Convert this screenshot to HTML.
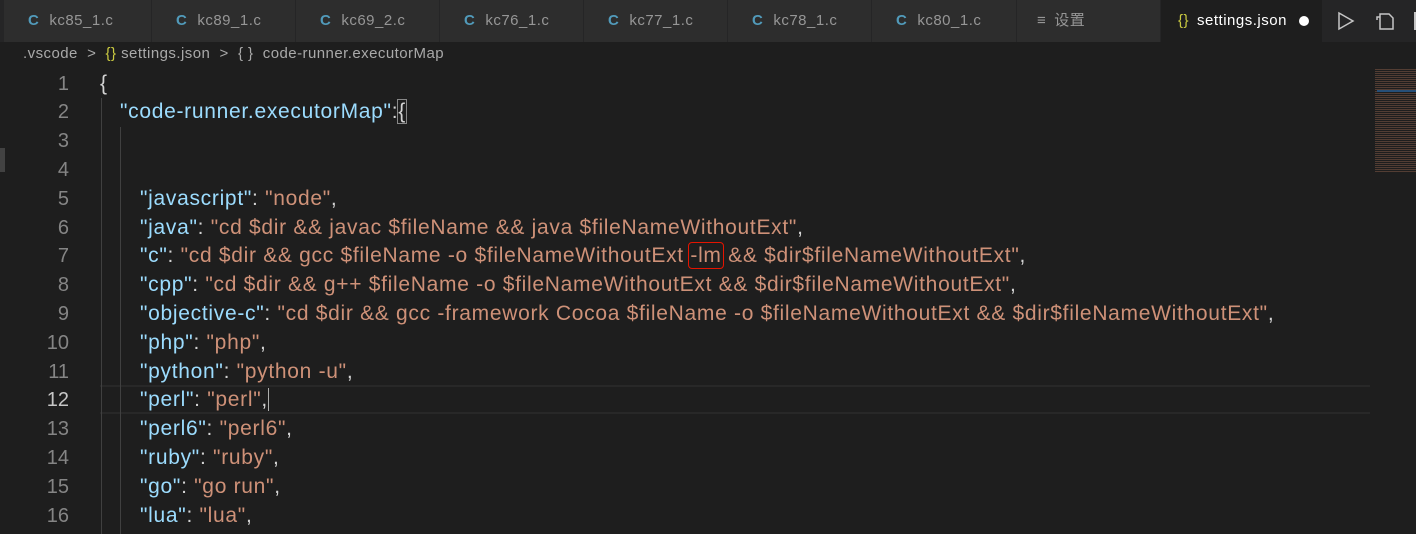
<!DOCTYPE html>
<html><head><meta charset="utf-8"><style>
*{margin:0;padding:0;box-sizing:border-box}
html,body{width:1416px;height:534px;overflow:hidden}
body{background:#1e1e1e;font-family:"Liberation Sans","Noto Sans CJK SC",sans-serif;position:relative}
.tabs{position:absolute;left:0;top:0;width:1416px;height:42px;background:#252526}
.tab{position:absolute;top:0;height:42px;background:#2d2d2d;border-right:1px solid #252526;color:#969696;font-size:15px;letter-spacing:0.5px;line-height:42px;padding-left:24px;white-space:nowrap}
.tab .c{color:#519aba;font-weight:bold;margin-right:10px}
.tab.act{background:#1e1e1e;color:#fff}
.bc{position:absolute;top:45px;left:23px;font-size:15px;letter-spacing:0.45px;color:#a9a9a9;white-space:pre}
.ln{position:absolute;left:0;width:69px;text-align:right;color:#858585;font-size:20px;height:28.8px;line-height:28.8px}
.code{position:absolute;left:100px;font-size:21px;letter-spacing:0.7px;height:28.8px;line-height:28.8px;white-space:pre;color:#d4d4d4}
.k{color:#9cdcfe}.s{color:#ce9178}
.guide{position:absolute;width:1px;background:#404040}
.box{outline:1px solid #e51400;outline-offset:1px;border-radius:2px}
</style></head><body>
<div class="tabs">
<div class="tab" style="left:4px;width:148px"><span class="c">C</span>kc85_1.c</div>
<div class="tab" style="left:152px;width:144px"><span class="c">C</span>kc89_1.c</div>
<div class="tab" style="left:296px;width:144px"><span class="c">C</span>kc69_2.c</div>
<div class="tab" style="left:440px;width:144px"><span class="c">C</span>kc76_1.c</div>
<div class="tab" style="left:584px;width:144px"><span class="c">C</span>kc77_1.c</div>
<div class="tab" style="left:728px;width:144px"><span class="c">C</span>kc78_1.c</div>
<div class="tab" style="left:872px;width:145px"><span class="c">C</span>kc80_1.c</div>
<div class="tab" style="left:1017px;width:144px;padding-left:20px"><span style="margin-right:8px">≡</span>设置</div>
<div class="tab act" style="left:1161px;width:162px;padding-left:17px"><span style="color:#cbcb41;margin-right:8px">{}</span>settings.json<span style="position:absolute;left:138px;top:16px;width:10px;height:10px;border-radius:5px;background:#fff"></span></div>
<svg style="position:absolute;left:1336px;top:11px" width="20" height="20"><path d="M3 2 L17 10 L3 18 Z" fill="none" stroke="#c5c5c5" stroke-width="1.5"/></svg>
<svg style="position:absolute;left:1374px;top:11px" width="22" height="22"><path d="M6 6 H3 V9 M6 3 V18 H19 V7 L15 3 Z M9 3 H15" fill="none" stroke="#c5c5c5" stroke-width="1.5"/></svg>
<div style="position:absolute;left:1414px;top:12px;width:2px;height:18px;background:#c5c5c5"></div>
</div>
<div class="bc">.vscode  &gt;  <span style="color:#cbcb41">{}</span> settings.json  &gt;  { }  code-runner.executorMap</div>
<div style="position:absolute;left:0;top:148px;width:5px;height:24px;background:#424242"></div>
<div style="position:absolute;left:100px;top:385px;width:1270px;height:29px;border-top:2px solid #282828;border-bottom:2px solid #282828"></div>
<div class="guide" style="left:101px;top:98px;height:436px"></div>
<div class="guide" style="left:120px;top:127px;height:407px"></div>
<div style="position:absolute;left:1375px;top:68px;width:41px;height:105px;background:repeating-linear-gradient(#1e1e1e 0 1px,#6a4a3c 1px 2px);opacity:.7"></div>
<div style="position:absolute;left:1377px;top:90px;width:39px;height:2px;background:#264f78"></div>
<div id="lines"></div>
<script>
var L=[
['{'],
['  <span class="k">"code-runner.executorMap"</span>:<span style="outline:1px solid #888">{</span>'],
[''],[''],
['    <span class="k">"javascript"</span>: <span class="s">"node"</span>,'],
['    <span class="k">"java"</span>: <span class="s">"cd $dir &amp;&amp; javac $fileName &amp;&amp; java $fileNameWithoutExt"</span>,'],
['    <span class="k">"c"</span>: <span class="s">"cd $dir &amp;&amp; gcc $fileName -o $fileNameWithoutExt <span class="box">-lm</span> &amp;&amp; $dir$fileNameWithoutExt"</span>,'],
['    <span class="k">"cpp"</span>: <span class="s">"cd $dir &amp;&amp; g++ $fileName -o $fileNameWithoutExt &amp;&amp; $dir$fileNameWithoutExt"</span>,'],
['    <span class="k">"objective-c"</span>: <span class="s">"cd $dir &amp;&amp; gcc -framework Cocoa $fileName -o $fileNameWithoutExt &amp;&amp; $dir$fileNameWithoutExt"</span>,'],
['    <span class="k">"php"</span>: <span class="s">"php"</span>,'],
['    <span class="k">"python"</span>: <span class="s">"python -u"</span>,'],
['    <span class="k">"perl"</span>: <span class="s">"perl"</span>,<span style="border-left:1px solid #aeafad"></span>'],
['    <span class="k">"perl6"</span>: <span class="s">"perl6"</span>,'],
['    <span class="k">"ruby"</span>: <span class="s">"ruby"</span>,'],
['    <span class="k">"go"</span>: <span class="s">"go run"</span>,'],
['    <span class="k">"lua"</span>: <span class="s">"lua"</span>,'],
['    <span class="k">"groovy"</span>: <span class="s">"groovy"</span>,']
];
var h='';
for(var i=0;i<L.length;i++){var t=69.6+i*28.8;
h+='<div class="ln" style="top:'+t+'px;'+(i==11?'color:#c6c6c6':'')+'">'+(i+1)+'</div>';
h+='<div class="code" style="top:'+t+'px">'+L[i][0].replace(/^( +)/,function(m){return '<span style="display:inline-block;width:'+(m.length*10)+'px"></span>'})+'</div>';}
document.getElementById('lines').innerHTML=h;
</script>
</body></html>
